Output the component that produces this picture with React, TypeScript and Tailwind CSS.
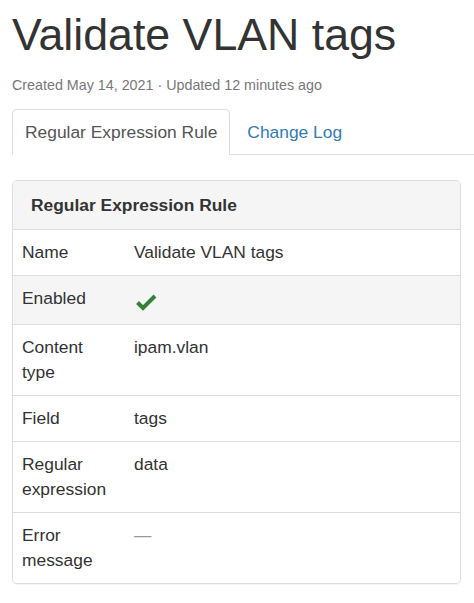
import React from 'react';

interface RuleRow {
  label: string;
  value: React.ReactNode;
  highlight?: boolean;
}

const CheckIcon: React.FC = () => (
  <svg width="22" height="18" viewBox="0 0 22 18" className="ml-[1px] mt-[3px]">
    <polyline
      points="2.5,9.5 8,15 20,3"
      fill="none"
      stroke="#37803a"
      strokeWidth="4"
      strokeLinejoin="miter"
    />
  </svg>
);

const rows: RuleRow[] = [
  { label: 'Name', value: 'Validate VLAN tags' },
  {
    label: 'Enabled',
    value: (
      <div className="flex h-[28px] items-center">
        <CheckIcon />
      </div>
    ),
    highlight: true,
  },
  { label: 'Content type', value: 'ipam.vlan' },
  { label: 'Field', value: 'tags' },
  { label: 'Regular expression', value: 'data' },
  { label: 'Error message', value: <span className="text-[#999]">—</span> },
];

const App: React.FC = () => {
  return (
    <div className="min-h-screen bg-white px-3 font-['Liberation_Sans',Arial,sans-serif] text-[#333]">
      <h1 className="pt-[10px] text-[44.7px] leading-[1.1] font-normal">Validate VLAN tags</h1>
      <p className="mt-4 text-[14.3px] leading-5 text-[#777]">
        Created May 14, 2021 · Updated 12 minutes ago
      </p>

      {/* tabs */}
      <div className="mt-[14px] -mr-3 flex border-b border-[#ddd]">
        <div className="-mb-px rounded-t-[5px] border border-[#ddd] border-b-white bg-white px-3 py-[10px] text-[17.4px] leading-6 text-[#555]">
          Regular Expression Rule
        </div>
        <div className="-mb-px ml-[1px] border border-transparent px-[15px] py-[10px] text-[17.4px] leading-6 text-[#337ab7]">
          Change Log
        </div>
      </div>

      {/* panel */}
      <div className="mt-[25px] w-[449px] overflow-hidden rounded-[5px] border border-[#ddd] shadow-[0_1px_1px_rgba(0,0,0,0.05)]">
        <div className="border-b border-[#ddd] bg-[#f5f5f5] px-[18px] py-3 text-[17.4px] leading-6 font-bold">
          Regular Expression Rule
        </div>
        <table className="w-full border-collapse text-[17.4px] leading-[25px]">
          <tbody>
            {rows.map((row, i) => (
              <tr
                key={row.label}
                className={`${i > 0 ? 'border-t border-[#ddd]' : ''} ${row.highlight ? 'bg-[#f5f5f5]' : 'bg-white'}`}
              >
                <td className="w-[112px] px-[9px] py-[10px] align-top">{row.label}</td>
                <td className="px-[9px] py-[10px] align-top">{row.value}</td>
              </tr>
            ))}
          </tbody>
        </table>
      </div>
    </div>
  );
};

export default App;
